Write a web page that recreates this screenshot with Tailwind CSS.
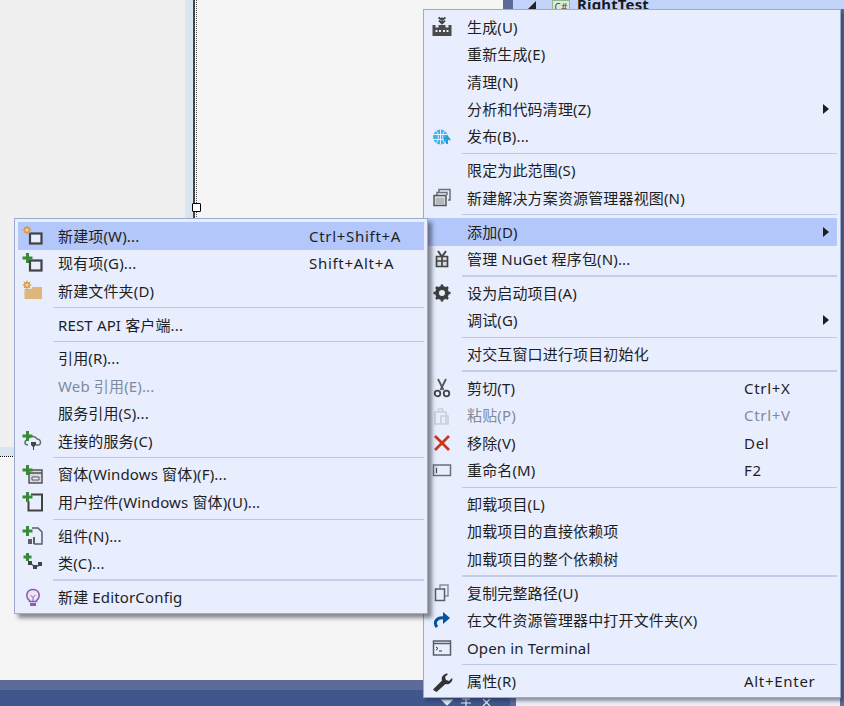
<!DOCTYPE html>
<html lang="zh-CN">
<head>
  <meta charset="UTF-8">
  <title>Context menu</title>
  <script src="https://cdn.jsdelivr.net/npm/@tailwindcss/browser@4"></script>
</head>
<body class="m-0">
<div class="relative w-[844px] h-[706px] overflow-hidden bg-[#f5f5f5] font-['Noto_Sans','Noto_Sans_CJK_SC',sans-serif] text-[15px] tracking-[0.15px] text-[#1e1e1e]">

  <!-- background panes -->
  <div class="flex h-[680px]">
    <div class="w-[503px] flex flex-col">
      <div class="flex h-[447px]">
        <div class="w-[185px] bg-[#f0f0f0]"></div>
        <div class="w-[8px] bg-[#d9e5f0]"></div>
        <div class="w-[2px] bg-[#444]"></div>
        <div class="w-[1px]"></div>
        <div class="w-0 border-l border-dotted border-[#555]"></div>
      </div>
      <div class="h-[9px] bg-[#d9e5f0]"></div>
      <div class="h-[2px] bg-white border-t border-dotted border-black"></div>
    </div>
    <div class="w-[10px] bg-[#5d6b99]"></div>
    <div class="flex-1 flex flex-col bg-[#5d6b99]">
      <div class="h-[9px] bg-[#c3d4fb] overflow-hidden flex items-start pl-[14px]">
        <svg width="10" height="9" viewBox="0 0 10 9"><path d="M9 1v8H1z" fill="#222"/></svg>
        <div class="ml-[15px] w-[18px] h-[16px] bg-[#dfead8] border border-[#8fb98a] text-[10px] leading-[13px] text-center text-[#444]">C#</div>
        <span class="ml-[7px] -mt-[6px] text-[15px] font-bold leading-[20px] text-[#1a1a1a]">RightTest</span>
      </div>
    </div>
  </div>
  <div class="flex h-[26px]">
    <div class="w-[510px] flex flex-col">
      <div class="h-[10px] bg-[#5d6b99]"></div>
      <div class="flex-1 bg-[#40568d] flex items-end pl-[441px]">
        <svg width="56" height="9" viewBox="0 0 56 9"><path d="M1 3h10L6 8zM21 2h8M25 2v4M20 6h10M25 6v3M42 2l7 7M49 2l-7 7" fill="#e8ecf5" stroke="#e8ecf5" stroke-width="1.2"/></svg>
      </div>
    </div>
    <div class="w-[6px] bg-[#5d6b99]"></div>
    <div class="flex-1 bg-[#eceef4]"></div>
    <div class="w-[4px] bg-[#5d6b99]"></div>
  </div>

  <!-- drag handle on the designer edge -->
  <div class="absolute left-[192px] top-[203px] w-[9px] h-[9px] bg-white border border-black rounded-[1px]"></div>

  <!-- project context menu -->
  <div class="absolute left-[423px] top-[9px] w-[418px] h-[689px] bg-[#e8eefe] border border-[#9babd0] px-[3px] pt-[3.4px] shadow-[3px_3px_3px_rgba(30,40,70,0.45)]">
    <div class="flex items-center h-[27.4px]"><span class="w-[30px] flex justify-center"><svg width="22" height="22" viewBox="0 0 22 22"><path d="M11 1.500v6M8 4.500l3 3 3-3M7.500 1.500l3.500 2.500 3.500-2.500" fill="none" stroke="#424242" stroke-width="1.800"/><path d="M1.500 9h3v2.500h3V9h7v2.500h3V9h3v11h-19z" fill="#4a4a4a"/><path d="M4.500 14h2v2h-2zM8 14h2v2H8zM12 14h2v2h-2zM15.500 14h2v2h-2z" fill="#e8eefe"/></svg></span><span class="ml-[10px]">生成(U)</span></div>
    <div class="flex items-center h-[27.4px] pl-[40px]">重新生成(E)</div>
    <div class="flex items-center h-[27.4px] pl-[40px]">清理(N)</div>
    <div class="flex items-center h-[27.4px] pl-[40px]">分析和代码清理(Z)<svg class="ml-auto mr-[8px]" width="6" height="10" viewBox="0 0 6 10"><path d="M0 0l6 5-6 5z" fill="#1e1e1e"/></svg></div>
    <div class="flex items-center h-[27.4px]"><span class="w-[30px] flex justify-center"><svg width="22" height="22" viewBox="0 0 22 22"><circle cx="9.500" cy="11" r="7.500" fill="#3fb2ea"/><path d="M2.500 8.500h14M2.500 13.500h14M9.500 3.500v15M5.500 5c2.500 4 2.500 8 0 12M13.500 5c-2.500 4-2.500 8 0 12" fill="none" stroke="#e8eefe" stroke-width="1"/><path d="M16 18v-6M13 14l3-3.500 3 3.500" fill="none" stroke="#1ba1e2" stroke-width="2"/></svg></span><span class="ml-[10px]">发布(B)...</span></div>
    <div class="h-[6.5px] flex items-center ml-[35px]"><div class="w-full h-px bg-[#bcc8e8]"></div></div>
    <div class="flex items-center h-[27.4px] pl-[40px]">限定为此范围(S)</div>
    <div class="flex items-center h-[27.4px]"><span class="w-[30px] flex justify-center"><svg width="22" height="22" viewBox="0 0 22 22"><path d="M8 5V2.500h11V13h-2" fill="none" stroke="#6b6f78" stroke-width="1.500"/><path d="M6 8V5.500h10V8" fill="none" stroke="#6b6f78" stroke-width="1.500"/><rect x="3" y="8.500" width="12" height="10" fill="#d5d8e0" stroke="#555" stroke-width="1.500"/><path d="M5.500 12h7M5.500 14h7M5.500 16h7" stroke="#555" stroke-dasharray="1 1"/></svg></span><span class="ml-[10px]">新建解决方案资源管理器视图(N)</span></div>
    <div class="h-[6.5px] flex items-center ml-[35px]"><div class="w-full h-px bg-[#bcc8e8]"></div></div>
    <div class="flex items-center h-[27.4px] bg-[#b3c7fb] pl-[40px]">添加(D)<svg class="ml-auto mr-[8px]" width="6" height="10" viewBox="0 0 6 10"><path d="M0 0l6 5-6 5z" fill="#1e1e1e"/></svg></div>
    <div class="flex items-center h-[27.4px]"><span class="w-[30px] flex justify-center"><svg width="22" height="22" viewBox="0 0 22 22"><path d="M5.500 8.500h11v10h-11zM11 8.500v10M5.500 13h11" fill="#d5d8e0" stroke="#444" stroke-width="1.700"/><path d="M7 3l3.500 5M15 3l-3.500 5" fill="none" stroke="#444" stroke-width="2"/></svg></span><span class="ml-[10px]">管理 NuGet 程序包(N)...</span></div>
    <div class="h-[6.5px] flex items-center ml-[35px]"><div class="w-full h-[2px] bg-[#c3cdec]"></div></div>
    <div class="flex items-center h-[27.4px]"><span class="w-[30px] flex justify-center"><svg width="22" height="22" viewBox="0 0 22 22"><circle cx="11" cy="11" r="5.200" fill="none" stroke="#3d3d3d" stroke-width="3.400"/><path d="M11 2.500v17M2.500 11h17M5 5l12 12M17 5L5 17" stroke="#3d3d3d" stroke-width="2.600"/><circle cx="11" cy="11" r="3" fill="#e8eefe"/></svg></span><span class="ml-[10px]">设为启动项目(A)</span></div>
    <div class="flex items-center h-[27.4px] pl-[40px]">调试(G)<svg class="ml-auto mr-[8px]" width="6" height="10" viewBox="0 0 6 10"><path d="M0 0l6 5-6 5z" fill="#1e1e1e"/></svg></div>
    <div class="h-[6.5px] flex items-center ml-[35px]"><div class="w-full h-px bg-[#bcc8e8]"></div></div>
    <div class="flex items-center h-[27.4px] pl-[40px]">对交互窗口进行项目初始化</div>
    <div class="h-[6.5px] flex items-center ml-[35px]"><div class="w-full h-[2px] bg-[#c3cdec]"></div></div>
    <div class="flex items-center h-[27.4px]"><span class="w-[30px] flex justify-center"><svg width="22" height="22" viewBox="0 0 22 22"><path d="M7 2l5.500 11M15 2L9.500 13" fill="none" stroke="#555" stroke-width="1.800"/><circle cx="6.500" cy="16.500" r="2.800" fill="none" stroke="#444" stroke-width="1.800"/><circle cx="15.500" cy="16.500" r="2.800" fill="none" stroke="#444" stroke-width="1.800"/></svg></span><span class="ml-[10px] w-[277px]">剪切(T)</span><span class="tracking-[0.7px]">Ctrl+X</span></div>
    <div class="flex items-center h-[27.4px] text-[#808a9c]"><span class="w-[30px] flex justify-center"><svg width="22" height="22" viewBox="0 0 22 22"><path d="M4 7h11v12H4zM10 11h7v8h-7zM7.500 7V4h4v3" fill="none" stroke="#c9ced9" stroke-width="1.600"/></svg></span><span class="ml-[10px] w-[277px]">粘贴(P)</span><span class="tracking-[0.7px]">Ctrl+V</span></div>
    <div class="flex items-center h-[27.4px]"><span class="w-[30px] flex justify-center"><svg width="22" height="22" viewBox="0 0 22 22"><path d="M4 4l14 14M18 4L4 18" stroke="#c5391f" stroke-width="2.800"/></svg></span><span class="ml-[10px] w-[277px]">移除(V)</span><span class="tracking-[0.7px]">Del</span></div>
    <div class="flex items-center h-[27.4px]"><span class="w-[30px] flex justify-center"><svg width="22" height="22" viewBox="0 0 22 22"><rect x="2.500" y="6" width="17" height="10.500" fill="#e8eefe" stroke="#6b6f78" stroke-width="1.500"/><path d="M3.500 7h3v8.500h-3z" fill="#cfd4e0"/><path d="M5.500 9v5" stroke="#444"/></svg></span><span class="ml-[10px] w-[277px]">重命名(M)</span><span class="tracking-[0.7px]">F2</span></div>
    <div class="h-[6.5px] flex items-center ml-[35px]"><div class="w-full h-px bg-[#bcc8e8]"></div></div>
    <div class="flex items-center h-[27.4px] pl-[40px]">卸载项目(L)</div>
    <div class="flex items-center h-[27.4px] pl-[40px]">加载项目的直接依赖项</div>
    <div class="flex items-center h-[27.4px] pl-[40px]">加载项目的整个依赖树</div>
    <div class="h-[6.5px] flex items-center ml-[35px]"><div class="w-full h-[2px] bg-[#c3cdec]"></div></div>
    <div class="flex items-center h-[27.4px]"><span class="w-[30px] flex justify-center"><svg width="22" height="22" viewBox="0 0 22 22"><path d="M9 6V3h8v11h-3" fill="none" stroke="#8a8e98" stroke-width="1.500"/><rect x="4.500" y="7" width="9" height="11.500" fill="none" stroke="#5a5e68" stroke-width="1.500"/></svg></span><span class="ml-[10px]">复制完整路径(U)</span></div>
    <div class="flex items-center h-[27.4px]"><span class="w-[30px] flex justify-center"><svg width="22" height="22" viewBox="0 0 22 22"><path d="M6 18c-4-5 0-10 7-9" fill="none" stroke="#00539c" stroke-width="3"/><path d="M12 3l7 6-7 6z" fill="#00539c"/></svg></span><span class="ml-[10px]">在文件资源管理器中打开文件夹(X)</span></div>
    <div class="flex items-center h-[27.4px]"><span class="w-[30px] flex justify-center"><svg width="22" height="22" viewBox="0 0 22 22"><rect x="2.500" y="4" width="17" height="14" fill="#e8eefe" stroke="#5a5e68" stroke-width="1.500"/><path d="M2.500 6.500h17" stroke="#5a5e68" stroke-width="1.500"/><path d="M5 10l2 1.500L5 13M8 14h3" fill="none" stroke="#333"/></svg></span><span class="ml-[10px]">Open in Terminal</span></div>
    <div class="h-[6.5px] flex items-center ml-[35px]"><div class="w-full h-px bg-[#bcc8e8]"></div></div>
    <div class="flex items-center h-[27.4px]"><span class="w-[30px] flex justify-center"><svg width="22" height="22" viewBox="0 0 22 22"><path d="M3 19.500l-1-1 9-9c-1-3 1-6.500 5-7l1 .5-3 3 1 3 3 1 3-3 .5 1c-.5 4-4 6-7 5l-9 8z" fill="#333"/></svg></span><span class="ml-[10px] w-[277px]">属性(R)</span><span class="tracking-[0.7px]">Alt+Enter</span></div>
  </div>

  <!-- add submenu -->
  <div class="absolute left-[14px] top-[218px] w-[414px] h-[396px] bg-[#e8eefe] border border-[#9babd0] px-[3px] pt-[3.4px] shadow-[4px_4px_4px_rgba(30,30,40,0.5)]">
    <div class="flex items-center h-[27.4px] bg-[#b3c7fb]"><span class="w-[30px] flex justify-center"><svg width="22" height="22" viewBox="0 0 22 22"><rect x="8" y="8.500" width="11.500" height="10" fill="#e8eefe" stroke="#424242" stroke-width="2.200"/><path d="M5 0l1 2.500L8.500 1.500 7.500 4 10 5 7.500 6 8.500 8.500 6 7.500 5 10 4 7.500 1.500 8.500 2.500 6 0 5 2.500 4 1.500 1.500 4 2.500z" fill="#d9983c"/><circle cx="5" cy="5" r="1.600" fill="#f3d9a6"/></svg></span><span class="ml-[10px] w-[251px]">新建项(W)...</span><span class="tracking-[0.7px]">Ctrl+Shift+A</span></div>
    <div class="flex items-center h-[27.4px]"><span class="w-[30px] flex justify-center"><svg width="22" height="22" viewBox="0 0 22 22"><rect x="8" y="8.500" width="11.500" height="10" fill="#e8eefe" stroke="#424242" stroke-width="2.200"/><path d="M4 1h3v3.500h3.500v3H7V11H4V7.500H.5v-3H4z" fill="#388a34"/></svg></span><span class="ml-[10px] w-[251px]">现有项(G)...</span><span class="tracking-[0.7px]">Shift+Alt+A</span></div>
    <div class="flex items-center h-[27.4px]"><span class="w-[30px] flex justify-center"><svg width="22" height="22" viewBox="0 0 22 22"><path d="M2.500 9h7l1-2h9.500v12H2.500z" fill="#dcb67a"/><path d="M5 0l1 2.500L8.500 1.500 7.500 4 10 5 7.500 6 8.500 8.500 6 7.500 5 10 4 7.500 1.500 8.500 2.500 6 0 5 2.500 4 1.500 1.500 4 2.500z" fill="#d9983c"/><circle cx="5" cy="5" r="1.600" fill="#f3d9a6"/></svg></span><span class="ml-[10px]">新建文件夹(D)</span></div>
    <div class="h-[6.5px] flex items-center ml-[35px]"><div class="w-full h-px bg-[#bcc8e8]"></div></div>
    <div class="flex items-center h-[27.4px] pl-[40px]">REST API 客户端...</div>
    <div class="h-[6.5px] flex items-center ml-[35px]"><div class="w-full h-px bg-[#bcc8e8]"></div></div>
    <div class="flex items-center h-[27.4px] pl-[40px]">引用(R)...</div>
    <div class="flex items-center h-[27.4px] pl-[40px] text-[#808a9c]">Web 引用(E)...</div>
    <div class="flex items-center h-[27.4px] pl-[40px]">服务引用(S)...</div>
    <div class="flex items-center h-[27.4px]"><span class="w-[30px] flex justify-center"><svg width="22" height="22" viewBox="0 0 22 22"><path d="M6 15c-4 0-4-5 0-5 0-4 7-5 9-1 4 0 5 6 1 6h-2" fill="none" stroke="#6b6f78" stroke-width="1.500"/><path d="M9 12h5v3l-2 2v3h-1v-3l-2-2z" fill="#444"/><path d="M4 1h3v3.500h3.500v3H7V11H4V7.500H.5v-3H4z" fill="#388a34"/></svg></span><span class="ml-[10px]">连接的服务(C)</span></div>
    <div class="h-[6.5px] flex items-center ml-[35px]"><div class="w-full h-px bg-[#bcc8e8]"></div></div>
    <div class="flex items-center h-[27.4px]"><span class="w-[30px] flex justify-center"><svg width="22" height="22" viewBox="0 0 22 22"><rect x="7" y="6" width="13" height="13" fill="#d5d8e0" stroke="#555" stroke-width="1.500"/><path d="M7 9h13" stroke="#555" stroke-width="1.500"/><path d="M10 13h7v3h-7z" fill="#e8eefe" stroke="#555"/><path d="M4 1h3v3.500h3.500v3H7V11H4V7.500H.5v-3H4z" fill="#388a34"/></svg></span><span class="ml-[10px]">窗体(Windows 窗体)(F)...</span></div>
    <div class="flex items-center h-[27.4px]"><span class="w-[30px] flex justify-center"><svg width="22" height="22" viewBox="0 0 22 22"><path d="M9 3.500h11v16H6.500V10" fill="#e8eefe" stroke="#424242" stroke-width="2"/><path d="M4 1h3v3.500h3.500v3H7V11H4V7.500H.5v-3H4z" fill="#388a34"/></svg></span><span class="ml-[10px]">用户控件(Windows 窗体)(U)...</span></div>
    <div class="h-[6.5px] flex items-center ml-[35px]"><div class="w-full h-px bg-[#bcc8e8]"></div></div>
    <div class="flex items-center h-[27.4px]"><span class="w-[30px] flex justify-center"><svg width="22" height="22" viewBox="0 0 22 22"><path d="M10 3h6l4 4v12h-8" fill="none" stroke="#5a5e68" stroke-width="1.500"/><path d="M6 14h4v5H6zM11 12h2v7h-2z" fill="#5a5e68"/><path d="M4 1h3v3.500h3.500v3H7V11H4V7.500H.5v-3H4z" fill="#388a34"/></svg></span><span class="ml-[10px]">组件(N)...</span></div>
    <div class="flex items-center h-[27.4px]"><span class="w-[30px] flex justify-center"><svg width="22" height="22" viewBox="0 0 22 22"><path d="M8 11l5 4 5-2" fill="none" stroke="#555" stroke-width="1.500"/><path d="M6 9h4v4H6zM11 13h4v4h-4zM16 10h4v4h-4z" fill="#424242"/><path d="M4 1h3v2.500h2.500v3H7V9H4V6.500H1.500v-3H4z" fill="#388a34"/></svg></span><span class="ml-[10px]">类(C)...</span></div>
    <div class="h-[6.5px] flex items-center ml-[35px]"><div class="w-full h-[2px] bg-[#c3cdec]"></div></div>
    <div class="flex items-center h-[27.4px]"><span class="w-[30px] flex justify-center"><svg width="22" height="22" viewBox="0 0 22 22"><path d="M7.500 14.500c-5-4-2.500-11 3.500-11s8.500 7 3.500 11v1h-7z" fill="#ede4f5" stroke="#8a5fb0" stroke-width="1.600"/><path d="M8.500 9l2.500 2.500L13.500 9M11 11.500v4" fill="none" stroke="#8a5fb0"/><path d="M8 17h6v3H8z" fill="#8a5fb0"/></svg></span><span class="ml-[10px]">新建 EditorConfig</span></div>
  </div>
</div>
</body>
</html>
